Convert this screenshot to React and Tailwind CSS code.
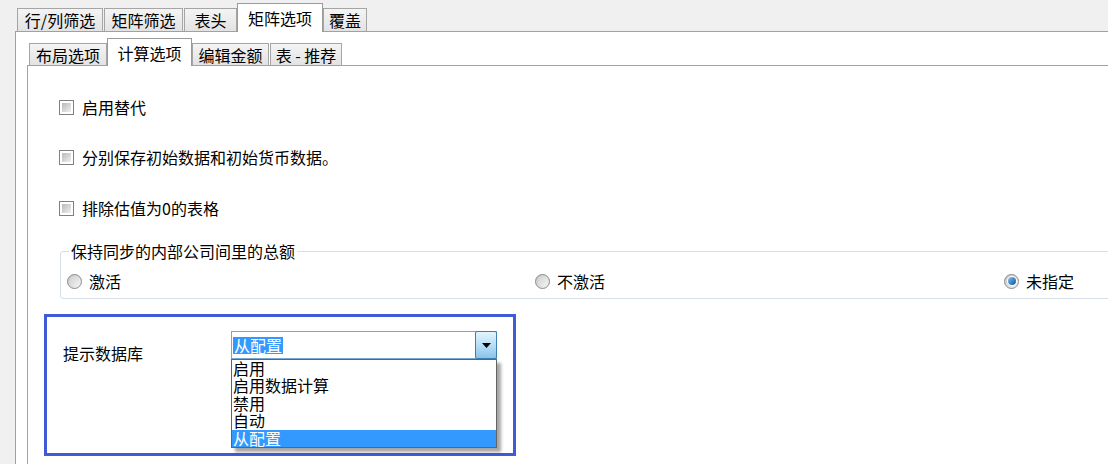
import React from "react";

const outerTabs = [
  { label: "行/列筛选", w: "w-[86px]" },
  { label: "矩阵筛选", w: "w-[79px]" },
  { label: "表头", w: "w-[53px]" },
  { label: "矩阵选项", w: "w-[86px]", active: true },
  { label: "覆盖", w: "w-[44px]" },
];

const innerTabs = [
  { label: "布局选项", w: "w-[78px]" },
  { label: "计算选项", w: "w-[85px]", active: true },
  { label: "编辑金额", w: "w-[77px]" },
  { label: "表 - 推荐", w: "w-[72px]" },
];

function Tab({ label, w, active, tall, short }) {
  if (active) {
    return (
      <div
        className={`${w} ${tall} -mb-px relative z-10 -mx-[1px] flex items-center justify-center border border-b-0 border-[#9a9a9a] bg-white text-[16px] leading-[20px] text-black`}
      >
        {label}
      </div>
    );
  }
  return (
    <div
      className={`${w} ${short} flex items-center justify-center border border-b-0 border-[#a5a5a5] bg-linear-to-b from-[#f4f4f4] to-[#e3e3e3] text-[16px] leading-[20px] text-black whitespace-nowrap`}
    >
      {label}
    </div>
  );
}

function Checkbox() {
  return (
    <div className="w-[15px] h-[15px] border border-[#7f8080] bg-white p-[2px] shrink-0">
      <div className="w-full h-full bg-linear-to-br from-[#b9b9b9] to-[#f0f0f0]" />
    </div>
  );
}

function Radio({ checked }) {
  return (
    <div className="w-[15px] h-[15px] rounded-full border border-[#8a8a8a] bg-linear-to-br from-[#c4c4c4] to-[#f6f6f6] flex items-center justify-center shrink-0">
      {checked ? (
        <div className="w-[10px] h-[10px] rounded-full bg-white flex items-center justify-center">
          <div className="w-[8px] h-[8px] rounded-full bg-linear-to-br from-[#7fc8f7] to-[#0f4f9c]" />
        </div>
      ) : (
        <div className="w-[10px] h-[10px] rounded-full bg-linear-to-br from-[#d0d0d0] to-[#f4f4f4]" />
      )}
    </div>
  );
}

function CheckRow({ label, className }) {
  return (
    <div className={`flex items-center h-[20px] ml-[31px] ${className}`}>
      <Checkbox />
      <span className="ml-[8px] text-[16px] leading-[20px] text-black whitespace-nowrap">{label}</span>
    </div>
  );
}

export default function App() {
  return (
    <div className="w-[1108px] h-[464px] overflow-hidden bg-[#f0f0f0] flex flex-col font-['Noto_Sans_CJK_SC','Microsoft_YaHei',sans-serif] text-black">
      {/* outer tabs */}
      <div className="flex items-end h-[31px] pl-[17px] gap-[1px] shrink-0">
        {outerTabs.map((t) => (
          <Tab key={t.label} {...t} tall="h-[29px]" short="h-[23px]" />
        ))}
      </div>
      {/* outer panel */}
      <div className="flex-1 ml-[15px] border-l border-t border-[#9da2a8] bg-white flex flex-col">
        <div className="flex items-end h-[33px] pl-[13px] gap-[1px] shrink-0">
          {innerTabs.map((t) => (
            <Tab key={t.label} {...t} tall="h-[28px]" short="h-[22px]" />
          ))}
        </div>
        {/* inner panel */}
        <div className="flex-1 ml-[11px] border-l border-t border-[#9da2a8] bg-white flex flex-col pt-[31px]">
          <CheckRow label="启用替代" />
          <CheckRow label="分别保存初始数据和初始货币数据。" className="mt-[30px]" />
          <CheckRow label="排除估值为0的表格" className="mt-[31px]" />

          <fieldset className="mt-[23px] ml-[32px] w-[1090px] border border-[#d5dfe5] rounded-[3px] pb-[7px]">
            <legend className="ml-[8px] px-[2px] text-[16px] leading-[20px] whitespace-nowrap">
              保持同步的内部公司间里的总额
            </legend>
            <div className="flex items-center h-[20px] mt-[10px] pl-[6px]">
              <div className="w-[468px] flex items-center">
                <Radio />
                <span className="ml-[7px] text-[16px] leading-[20px]">激活</span>
              </div>
              <div className="w-[469px] flex items-center">
                <Radio />
                <span className="ml-[7px] text-[16px] leading-[20px]">不激活</span>
              </div>
              <div className="flex items-center">
                <Radio checked />
                <span className="ml-[7px] text-[16px] leading-[20px]">未指定</span>
              </div>
            </div>
          </fieldset>

          {/* highlighted box */}
          <div className="mt-[15px] ml-[16px] w-[472px] h-[142px] border-[3px] border-[#3f5cd6] flex items-start pl-[16px] pt-[14px] shrink-0">
            <div className="w-[168px] mt-[12px] text-[16px] leading-[20px] whitespace-nowrap">提示数据库</div>
            <div className="relative w-[266px] h-[28px] border border-[#7aa7cf] bg-white flex items-center">
              <div className="flex-1 pl-[1px] flex items-center">
                <span className="bg-[#3399ff] text-white text-[16px] leading-[17px] px-[1px]">从配置</span>
              </div>
              <div className="w-[22px] h-[28px] -my-px -mr-px border border-[#3c7fb1] rounded-[2px] bg-linear-to-b from-[#e5f4fc] via-[#b8def6] to-[#8ac4ea] flex items-center justify-center">
                <svg width="9" height="5" viewBox="0 0 9 5">
                  <path d="M0 0 H9 L4.5 5 Z" fill="#000" />
                </svg>
              </div>
              {/* dropdown list */}
              <div className="absolute left-[-1px] top-[27px] w-[266px] border border-[#646464] bg-white shadow-[4px_4px_3px_rgba(0,0,0,0.35)] z-20 flex flex-col">
                {["启用", "启用数据计算", "禁用", "自动"].map((it) => (
                  <div key={it} className="pl-[1px] text-[16px] leading-[17.4px] h-[17.4px] text-black whitespace-nowrap">
                    {it}
                  </div>
                ))}
                <div className="pl-[1px] text-[16px] leading-[17.4px] h-[17.4px] bg-[#3399ff] text-white">从配置</div>
              </div>
            </div>
          </div>
        </div>
      </div>
    </div>
  );
}
